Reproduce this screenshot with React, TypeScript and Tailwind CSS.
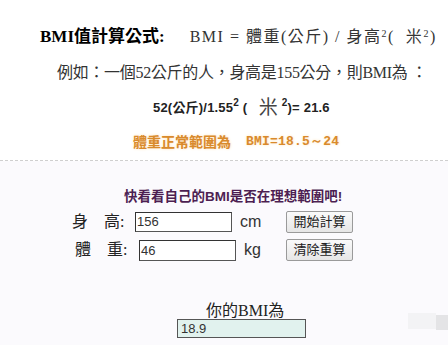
const cjk = '"Liberation Serif", "Noto Sans CJK TC", serif'
const sans = 'Arial, "Liberation Sans", "Noto Sans CJK TC", sans-serif'

export default function App() {
  return (
    <div
      className="w-[448px] h-[345px] overflow-hidden bg-white text-[#222] relative"
      style={{ fontFamily: cjk }}
    >
      {/* formula block */}
      <div className="flex flex-col">
        <div className="mt-[27px] h-[20px] flex items-center pl-[40px] whitespace-nowrap">
          <span className="text-[17px] font-bold text-black">BMI值計算公式:</span>
          <span className="ml-[25px] text-[16px] text-[#333] tracking-[1.5px]">
            BMI = 體重(公斤) / 身高<sup className="text-[10px]">2</sup>( &nbsp;米<sup className="text-[10px]">2</sup>)
          </span>
        </div>
        <div className="mt-[16px] h-[20px] flex items-center pl-[57px] text-[16px] text-[#333] whitespace-nowrap tracking-[-0.3px]">
          例如：一個52公斤的人，身高是155公分，則BMI為 ：
        </div>
        <div
          className="mt-[15px] h-[20px] flex items-center pl-[153px] text-[13px] font-bold text-[#222] whitespace-nowrap tracking-[0.2px]"
          style={{ fontFamily: sans }}
        >
          52(公斤)/1.55<sup className="text-[10px]">2</sup>&nbsp;(&nbsp;&nbsp;&nbsp;
          <span className="text-[19px] font-normal text-[#444]">米</span>
          &nbsp;<sup className="text-[10px]">2</sup>)= 21.6
        </div>
        <div
          className="mt-[14px] h-[20px] flex items-center pl-[133px] text-[14px] font-bold text-[#d98a2c] whitespace-nowrap [text-shadow:0_0_3px_#fde2b8]"
        >
          <span>體重正常範圍為</span>
          <span className="ml-[15px] text-[13px] tracking-[0.2px]" style={{ fontFamily: '"Liberation Mono", monospace' }}>
            BMI=18.5～24
          </span>
        </div>
      </div>

      <div className="mt-[8px] border-t border-dashed border-[#cfcfcf]" />

      {/* calculator */}
      <div className="bg-[#fbfafd] h-[200px] flex flex-col">
        <div
          className="mt-[26px] pl-[124px] text-[13.5px] font-bold text-[#4d1f52] whitespace-nowrap"
          style={{ fontFamily: sans }}
        >
          快看看自己的BMI是否在理想範圍吧!
        </div>

        <div className="mt-[4px] flex items-center h-[22px] whitespace-nowrap">
          <span className="ml-[72px] w-[63px] text-[16px] text-[#222]">身&nbsp;&nbsp;&nbsp;&nbsp;高:</span>
          <div
            className="w-[97px] h-[20px] border border-[#555] border-t-[#333] border-l-[#333] bg-white text-[13px] text-[#333] pl-[1px] leading-[18px]"
            style={{ fontFamily: sans }}
          >
            156
          </div>
          <span className="ml-[8px] w-[46px] text-[16px] text-[#333]" style={{ fontFamily: sans }}>cm</span>
          <button
            className="w-[67px] h-[22px] border border-[#9a9a9a] rounded-[2px] bg-gradient-to-b from-[#fafafa] to-[#e6e6e6] text-[13px] text-[#222] leading-[20px]"
            style={{ fontFamily: cjk }}
          >
            開始計算
          </button>
        </div>

        <div className="mt-[6px] flex items-center h-[22px] whitespace-nowrap">
          <span className="ml-[75px] w-[64px] text-[16px] text-[#222]">體&nbsp;&nbsp;&nbsp;&nbsp;重:</span>
          <div
            className="w-[97px] h-[21px] border border-[#555] border-t-[#333] border-l-[#333] bg-white text-[13px] text-[#333] pl-[1px] leading-[19px]"
            style={{ fontFamily: sans }}
          >
            46
          </div>
          <span className="ml-[8px] w-[42px] text-[16px] text-[#333]" style={{ fontFamily: sans }}>kg</span>
          <button
            className="w-[67px] h-[22px] border border-[#9a9a9a] rounded-[2px] bg-gradient-to-b from-[#fafafa] to-[#e6e6e6] text-[13px] text-[#222] leading-[20px]"
            style={{ fontFamily: cjk }}
          >
            清除重算
          </button>
        </div>

        <div className="mt-[42px] pl-[206px] text-[16px] text-[#222] leading-[16px] whitespace-nowrap">你的BMI為</div>
        <div
          className="ml-[177px] w-[129px] h-[19px] border border-[#555] bg-[#e1f2ee] text-[13px] text-[#333] pl-[3px] leading-[17px]"
          style={{ fontFamily: sans }}
        >
          18.9
        </div>
      </div>

      {/* faint watermark corner */}
      <div className="absolute right-0 top-[315px] w-[12px] h-[15px] bg-[#e4e4e6]" />
      <div className="absolute right-[12px] top-[313px] w-[28px] h-[16px] bg-[#f3f3f5]" />
    </div>
  )
}
